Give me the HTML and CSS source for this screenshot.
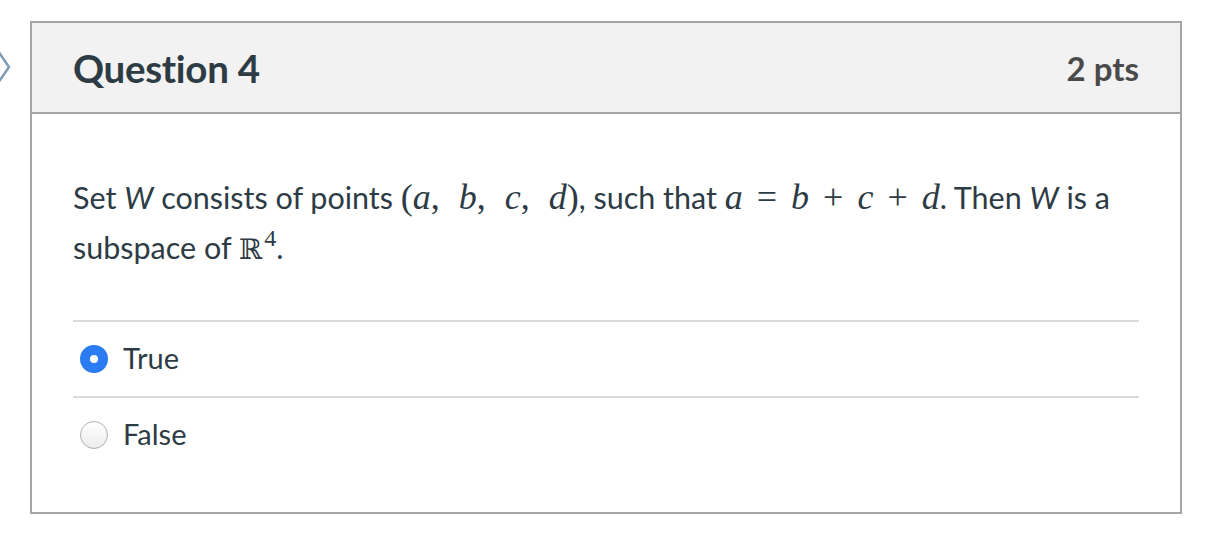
FILE: index.html
```html
<!DOCTYPE html>
<html>
<head>
<meta charset="utf-8">
<link rel="stylesheet" href="styles.css">
</head>
<body>
<div class="page">
  <div class="chev">
    <svg width="14" height="34" viewBox="0 0 14 34"><path d="M1 1 L12 17 L1 33" fill="none" stroke="#7f9ab3" stroke-width="2.5"/></svg>
  </div>
  <div class="question">
    <div class="header">
      <h2 class="title">Question 4</h2>
      <span class="pts">2 pts</span>
    </div>
    <div class="body">
      <p class="text">Set <i>W</i> consists of points <span class="m"><span class="up">(</span>a<span class="up">,</span><span class="sp"></span>b<span class="up">,</span><span class="sp"></span>c<span class="up">,</span><span class="sp"></span>d<span class="up">)</span></span>, such that <span class="m">a<span class="op">=</span>b<span class="op">+</span>c<span class="op">+</span>d</span>. Then <i>W</i> is a subspace of <span class="m"><span class="bb">ℝ</span><sup class="sup">4</sup></span>.</p>
      <div class="answers">
        <label class="answer">
          <span class="radio checked"></span>
          <span class="alabel">True</span>
        </label>
        <label class="answer">
          <span class="radio"></span>
          <span class="alabel">False</span>
        </label>
      </div>
    </div>
  </div>
</div>
</body>
</html>
```
FILE: styles.css
```css
html, body {
  margin: 0;
  padding: 0;
  background: #fff;
}
body {
  font-family: Lato, "Noto Sans", sans-serif;
  color: #2d3b45;
}
.page {
  position: relative;
  padding: 21px 0 0 30px;
}
.chev {
  position: absolute;
  left: -3px;
  top: 50px;
}
.question {
  width: 1148px;
  height: 489px;
  border: 2px solid #a5a5a5;
  display: flex;
  flex-direction: column;
}
.header {
  height: 89px;
  background: #f2f2f2;
  border-bottom: 2px solid #a5a5a5;
  display: flex;
  align-items: center;
  justify-content: space-between;
  padding: 0 41px;
}
.title {
  margin: 0;
  font-size: 38.5px;
  font-weight: 700;
  color: #2d3b45;
  letter-spacing: -0.3px;
}
.pts {
  font-size: 33px;
  font-weight: 700;
  color: #4a4a4a;
}
.body {
  padding: 58px 41px 0 41px;
}
.text {
  margin: 0;
  font-size: 30.5px;
  line-height: 50px;
}
.m {
  font-family: "Liberation Serif", "DejaVu Serif", serif;
  font-style: italic;
  font-size: 36px;
  line-height: 1;
}
.up, .op {
  font-style: normal;
}
.sp {
  display: inline-block;
  width: 19px;
}
.op {
  padding: 0 14px;
}
.bb {
  font-family: "DejaVu Serif", serif;
  font-style: normal;
  font-size: 28px;
}
.sup {
  font-style: normal;
  font-size: 24px;
  vertical-align: 13px;
  line-height: 0;
  margin-left: 2px;
}
.answers {
  margin-top: 48px;
}
.answer {
  display: flex;
  align-items: center;
  border-top: 2px solid #dadada;
  height: 74px;
  gap: 15px;
  padding-left: 7px;
}
.radio {
  width: 28px;
  height: 28px;
  border-radius: 50%;
  border: 1px solid #b0b0b0;
  background: linear-gradient(#fff, #ececec);
  box-sizing: border-box;
  flex: none;
}
.radio.checked {
  border: 10px solid #2b7cf3;
  background: #fff;
}
.alabel {
  font-size: 29px;
  margin-top: -4px;
}
```
